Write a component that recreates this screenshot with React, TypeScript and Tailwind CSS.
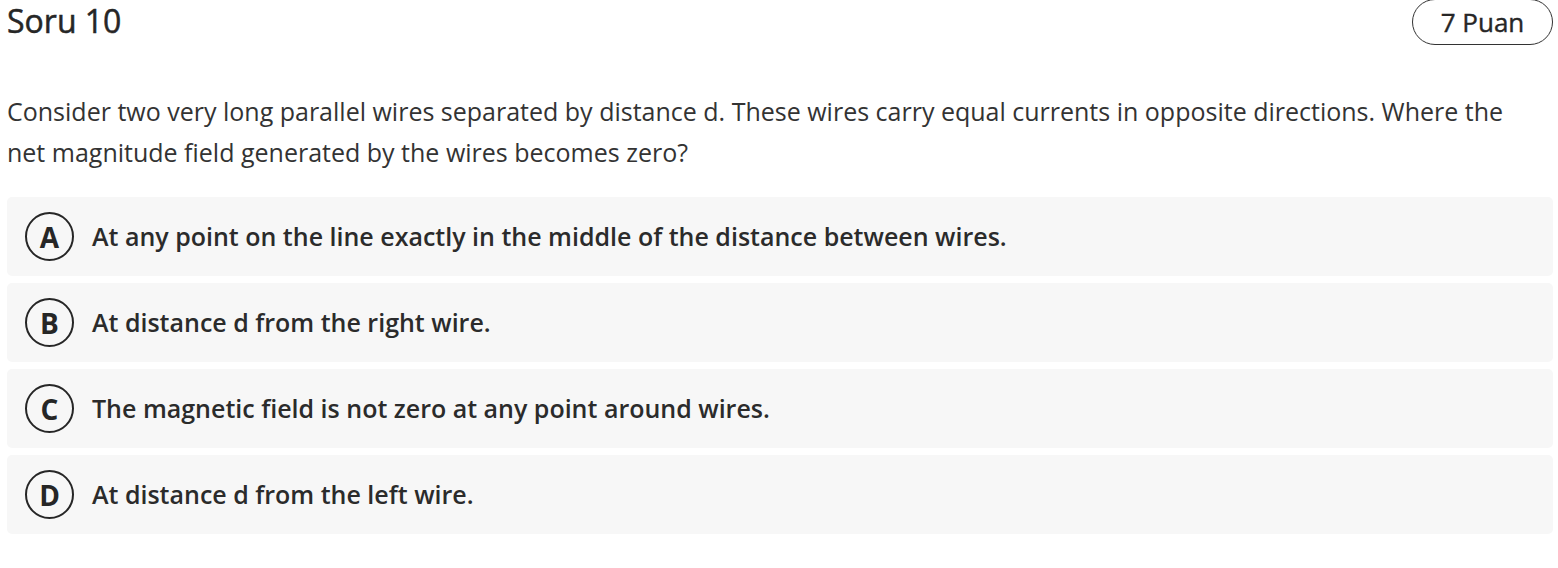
import React from "react";

type Option = {
  key: string;
  text: string;
};

const OPTIONS: Option[] = [
  { key: "A", text: "At any point on the line exactly in the middle of the distance between wires." },
  { key: "B", text: "At distance d from the right wire." },
  { key: "C", text: "The magnetic field is not zero at any point around wires." },
  { key: "D", text: "At distance d from the left wire." },
];

function OptionRow({ option }: { option: Option }) {
  return (
    <div className="h-[79px] bg-[#f7f7f7] rounded-[5px] flex items-center pl-[18px] gap-[18px]">
      <span className="size-[49px] shrink-0 rounded-full border-[2.5px] border-[#262626] flex items-center justify-center text-[28px] font-bold text-[#262626] leading-none">
        {option.key}
      </span>
      <span className="text-[25px] font-semibold text-[#2b2b2b]">{option.text}</span>
    </div>
  );
}

export default function App() {
  return (
    <div
      className="w-[1558px] h-[568px] bg-white pl-[7px] pr-[5px] overflow-hidden"
      style={{ fontFamily: '"Open Sans", "Liberation Sans", sans-serif' }}
    >
      {/* header */}
      <div className="h-[44px] flex items-center justify-between">
        <h1 className="text-[32px] font-medium text-[#262626] leading-[40px] -mt-[2px] [-webkit-text-stroke-width:0.5px]">
          Soru 10
        </h1>
        <div className="h-[46px] w-[141px] rounded-full border-[1.5px] border-[#333] flex items-center justify-center text-[26px] text-[#262626] [-webkit-text-stroke-width:0.4px]">
          7 Puan
        </div>
      </div>

      {/* question */}
      <p className="mt-[47px] pr-[36px] text-[25px] leading-[41px] text-[#333]">
        Consider two very long parallel wires separated by distance d. These wires carry equal currents in
        opposite directions. Where the net magnitude field generated by the wires becomes zero?
      </p>

      {/* options */}
      <div className="mt-[24px] flex flex-col gap-[7px]">
        {OPTIONS.map((o) => (
          <OptionRow key={o.key} option={o} />
        ))}
      </div>
    </div>
  );
}
